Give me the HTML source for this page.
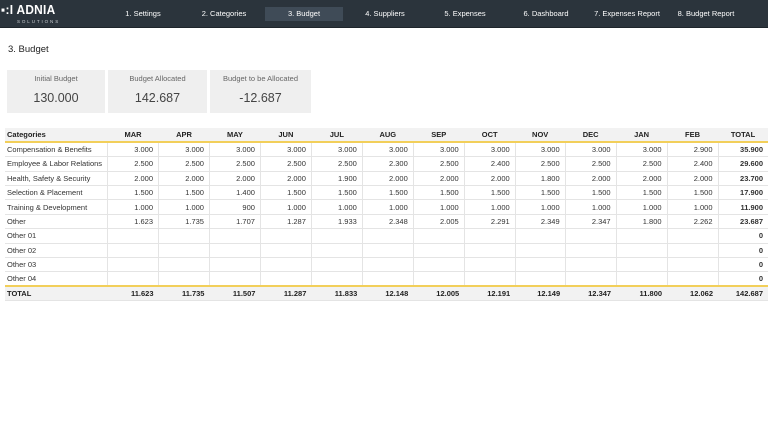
<!DOCTYPE html>
<html><head><meta charset="utf-8"><style>
*{margin:0;padding:0;box-sizing:border-box}
body{width:768px;height:427px;background:#fff;font-family:"Liberation Sans",sans-serif;position:relative;overflow:hidden;color:#333}
.nav{position:absolute;left:0;top:0;width:768px;height:28px;background:#2b343c;border-bottom:1px solid #1e252b}
.logo{position:absolute;left:1px;top:4px;color:#fff;font-weight:bold;font-size:12.5px;letter-spacing:0.3px;line-height:13px;transform:scaleX(0.95);transform-origin:left}
.sol{position:absolute;left:17px;top:19px;color:#c8ccd0;font-size:4.5px;letter-spacing:1.9px}
.tab{position:absolute;top:7px;height:14px;width:78px;color:#fff;font-size:7.5px;line-height:14px;text-align:center}
.tab.act{background:#3f4b57}
h1{position:absolute;left:8px;top:44px;font-size:9.5px;font-weight:normal;color:#222}
.kpi{position:absolute;top:70px;height:43px;background:#efefef;text-align:center}
.kpi .l{font-size:7.5px;color:#666;margin-top:4px}
.kpi .v{font-size:12.5px;color:#444;margin-top:8px}
table{position:absolute;left:5px;top:128px;border-collapse:collapse;table-layout:fixed;font-size:7.5px;color:#333}
td{height:14.4px;padding:0 5px;text-align:right;border-right:1px solid #e4e4e4;border-bottom:1px solid #e4e4e4;white-space:nowrap;overflow:hidden}
td:first-child{text-align:left;padding-left:2px}
tr.h td{background:#f2f2f2;font-weight:bold;text-align:center;border-bottom:2px solid #f2cf5a;border-right:none;color:#222}
tr.h td:first-child{text-align:left}
tr.t td{background:#f2f2f2;font-weight:bold;border-top:2px solid #f2cf5a;border-right:none;color:#222}
td:last-child{font-weight:bold;border-right:none}
</style></head><body>
<div class="nav">
<div class="logo">▪:I ADNIA</div><div class="sol">SOLUTIONS</div>
<div class="tab" style="left:104px">1. Settings</div>
<div class="tab" style="left:185px">2. Categories</div>
<div class="tab act" style="left:265px">3. Budget</div>
<div class="tab" style="left:346px">4. Suppliers</div>
<div class="tab" style="left:426px">5. Expenses</div>
<div class="tab" style="left:507px">6. Dashboard</div>
<div class="tab" style="left:588px">7. Expenses Report</div>
<div class="tab" style="left:667px">8. Budget Report</div>
</div>
<h1>3. Budget</h1>
<div class="kpi" style="left:7px;width:98px"><div class="l">Initial Budget</div><div class="v">130.000</div></div>
<div class="kpi" style="left:108px;width:99px"><div class="l">Budget Allocated</div><div class="v">142.687</div></div>
<div class="kpi" style="left:210px;width:101px"><div class="l">Budget to be Allocated</div><div class="v">-12.687</div></div>
<table>
<colgroup><col style="width:102px"><col style="width:51px"><col style="width:51px"><col style="width:51px"><col style="width:51px"><col style="width:51px"><col style="width:51px"><col style="width:51px"><col style="width:51px"><col style="width:50px"><col style="width:51px"><col style="width:51px"><col style="width:51px"><col style="width:50px"></colgroup>
<tr class="h"><td>Categories</td><td>MAR</td><td>APR</td><td>MAY</td><td>JUN</td><td>JUL</td><td>AUG</td><td>SEP</td><td>OCT</td><td>NOV</td><td>DEC</td><td>JAN</td><td>FEB</td><td>TOTAL</td></tr>
<tr><td>Compensation &amp; Benefits</td><td>3.000</td><td>3.000</td><td>3.000</td><td>3.000</td><td>3.000</td><td>3.000</td><td>3.000</td><td>3.000</td><td>3.000</td><td>3.000</td><td>3.000</td><td>2.900</td><td>35.900</td></tr>
<tr><td>Employee &amp; Labor Relations</td><td>2.500</td><td>2.500</td><td>2.500</td><td>2.500</td><td>2.500</td><td>2.300</td><td>2.500</td><td>2.400</td><td>2.500</td><td>2.500</td><td>2.500</td><td>2.400</td><td>29.600</td></tr>
<tr><td>Health, Safety &amp; Security</td><td>2.000</td><td>2.000</td><td>2.000</td><td>2.000</td><td>1.900</td><td>2.000</td><td>2.000</td><td>2.000</td><td>1.800</td><td>2.000</td><td>2.000</td><td>2.000</td><td>23.700</td></tr>
<tr><td>Selection &amp; Placement</td><td>1.500</td><td>1.500</td><td>1.400</td><td>1.500</td><td>1.500</td><td>1.500</td><td>1.500</td><td>1.500</td><td>1.500</td><td>1.500</td><td>1.500</td><td>1.500</td><td>17.900</td></tr>
<tr><td>Training &amp; Development</td><td>1.000</td><td>1.000</td><td>900</td><td>1.000</td><td>1.000</td><td>1.000</td><td>1.000</td><td>1.000</td><td>1.000</td><td>1.000</td><td>1.000</td><td>1.000</td><td>11.900</td></tr>
<tr><td>Other</td><td>1.623</td><td>1.735</td><td>1.707</td><td>1.287</td><td>1.933</td><td>2.348</td><td>2.005</td><td>2.291</td><td>2.349</td><td>2.347</td><td>1.800</td><td>2.262</td><td>23.687</td></tr>
<tr><td>Other 01</td><td></td><td></td><td></td><td></td><td></td><td></td><td></td><td></td><td></td><td></td><td></td><td></td><td>0</td></tr>
<tr><td>Other 02</td><td></td><td></td><td></td><td></td><td></td><td></td><td></td><td></td><td></td><td></td><td></td><td></td><td>0</td></tr>
<tr><td>Other 03</td><td></td><td></td><td></td><td></td><td></td><td></td><td></td><td></td><td></td><td></td><td></td><td></td><td>0</td></tr>
<tr><td>Other 04</td><td></td><td></td><td></td><td></td><td></td><td></td><td></td><td></td><td></td><td></td><td></td><td></td><td>0</td></tr>
<tr class="t"><td>TOTAL</td><td>11.623</td><td>11.735</td><td>11.507</td><td>11.287</td><td>11.833</td><td>12.148</td><td>12.005</td><td>12.191</td><td>12.149</td><td>12.347</td><td>11.800</td><td>12.062</td><td>142.687</td></tr>
</table>
</body></html>
